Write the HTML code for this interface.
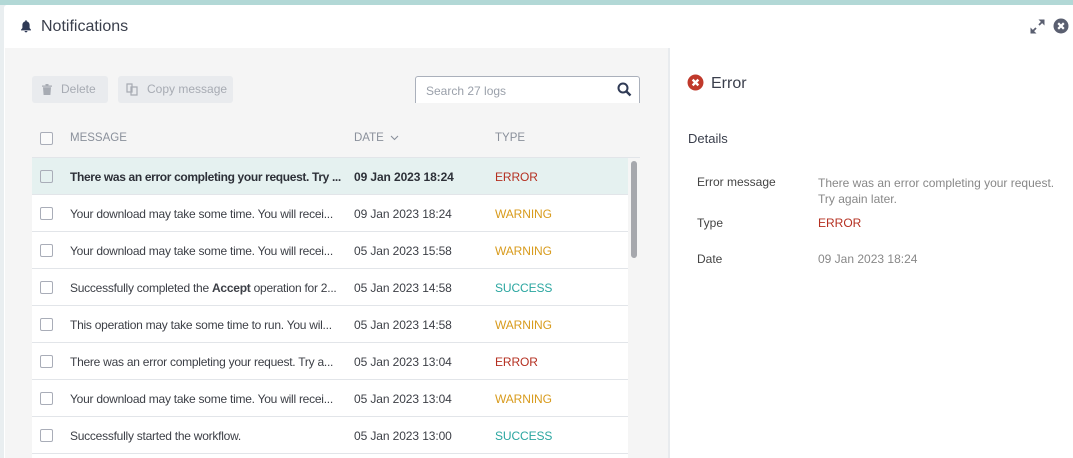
<!DOCTYPE html>
<html style="width:1073px;height:458px;overflow:hidden"><head><meta charset="utf-8"><style>
*{box-sizing:border-box;margin:0;padding:0}
body{width:1073px;height:458px;overflow:hidden;background:#e9eef0;font-family:"Liberation Sans",sans-serif;color:#333;position:relative}
.topstrip{position:absolute;left:0;top:0;width:1073px;height:5px;background:#b2d8d6}
.modal{position:absolute;left:4px;top:5px;width:1069px;height:453px;background:#fff;border-top-left-radius:3px}
.a{position:absolute;white-space:nowrap}
.left{position:absolute;left:5px;top:48px;width:663px;height:410px;background:#f5f5f5}
.div{position:absolute;left:668px;top:48px;width:2px;height:410px;background:#e8ebee}
.btn{position:absolute;top:76px;height:27px;background:#e9ebee;border-radius:3px;color:#a7abb3;font-size:12px;line-height:27px}
.row{position:absolute;left:32px;width:596px;height:37px;background:#fff;border-bottom:1px solid #e2e5e9;font-size:12px;color:#3c3f46}
.row .cb,.hdr .cb{position:absolute;left:8px;top:12px;width:13px;height:13px;border:1.5px solid #a9adb8;border-radius:2px;background:#fff}
.row .m{position:absolute;left:38px;top:12px;letter-spacing:-0.25px}
.row .d{position:absolute;left:322px;top:12px;letter-spacing:-0.1px}
.row .t{position:absolute;left:463px;top:12px;letter-spacing:-0.1px}
.err{color:#b53021}.warn{color:#d89b1d}.succ{color:#2aa6a0}
.lbl{font-size:12px;color:#444}
.val{font-size:12px;color:#888}
</style></head><body>
<div class="topstrip"></div>
<div class="modal"></div>
<svg class="a" style="left:19px;top:19px" width="14" height="14" viewBox="0 0 14 14"><path d="M7 1.2c-.5 0-.8.3-.8.8v.4C4.4 2.8 3.4 4.3 3.4 6v3L2 10.8v.6h10v-.6L10.6 9V6c0-1.7-1-3.2-2.8-3.6V2c0-.5-.3-.8-.8-.8zM5.6 12a1.4 1.4 0 0 0 2.8 0z" fill="#2f3a55"/></svg>
<div class="a" style="left:41px;top:18px;font-size:16px;color:#3a3f4c">Notifications</div>
<svg class="a" style="left:1029px;top:18px" width="17" height="17" viewBox="0 0 17 17"><path d="M2 15l5-5M15 2l-5 5" stroke="#5a5f70" stroke-width="1.8"/><path d="M1.5 9.5v6h6zM15.5 7.5v-6h-6z" fill="#5a5f70"/></svg>
<svg class="a" style="left:1053px;top:18px" width="16" height="16" viewBox="0 0 16 16"><circle cx="8" cy="8" r="7.5" fill="#5a5f70"/><path d="M5.2 5.2l5.6 5.6M10.8 5.2l-5.6 5.6" stroke="#fff" stroke-width="2.2"/></svg>
<div class="left"></div>
<div class="div"></div>
<div class="btn" style="left:32px;width:76px"><svg class="a" style="left:10px;top:8px" width="10" height="11" viewBox="0 0 10 11"><path d="M0 1.5h10v1.2H0zM3.5 0h3v1.5h-3zM1 3.2h8l-.6 7.8H1.6z" fill="#a7abb3"/></svg><span class="a" style="left:29px">Delete</span></div>
<div class="btn" style="left:118px;width:115px"><svg class="a" style="left:8px;top:7px" width="13" height="13" viewBox="0 0 13 13"><path d="M1 1h5v8H1zM5 4h6v8H5z" fill="none" stroke="#a7abb3" stroke-width="1.2"/></svg><span class="a" style="left:29px">Copy message</span></div>
<div class="a" style="left:415px;top:76px;width:225px;height:27px;background:#fff;border:1px solid #aab0bb;border-bottom:none;border-radius:3px 3px 0 0"></div>
<div class="a" style="left:426px;top:84px;font-size:12px;color:#9aa0aa">Search 27 logs</div>
<svg class="a" style="left:617px;top:82px" width="15" height="15" viewBox="0 0 15 15"><circle cx="6" cy="6" r="4.5" fill="none" stroke="#2f3a55" stroke-width="2"/><path d="M9.5 9.5l4 4" stroke="#2f3a55" stroke-width="2.4"/></svg>
<div class="hdr a" style="left:32px;top:120px;width:608px;height:38px;border-bottom:1px solid #e2e5e9"><div class="cb" style="top:12px;background:#fafafa"></div>
<span class="a" style="left:38px;top:12px;font-size:11.5px;color:#8a909b">MESSAGE</span>
<span class="a" style="left:322px;top:12px;font-size:11.5px;color:#8a909b">DATE <svg width="9" height="6" viewBox="0 0 9 6" style="margin-left:3px"><path d="M1 1l3.5 3.5L8 1" fill="none" stroke="#8a909b" stroke-width="1.1"/></svg></span>
<span class="a" style="left:463px;top:12px;font-size:11.5px;color:#8a909b">TYPE</span></div>
<div class="row" style="top:158px;background:#e5f1f0;font-weight:bold;color:#2d3038"><div class="cb" style="background:#e5f1f0"></div><span class="m" style="letter-spacing:-0.35px">There was an error completing your request. Try ...</span><span class="d">09 Jan 2023 18:24</span><span class="t err" style="font-weight:normal">ERROR</span></div>
<div class="row" style="top:195px"><div class="cb"></div><span class="m">Your download may take some time. You will recei...</span><span class="d">09 Jan 2023 18:24</span><span class="t warn">WARNING</span></div>
<div class="row" style="top:232px"><div class="cb"></div><span class="m">Your download may take some time. You will recei...</span><span class="d">05 Jan 2023 15:58</span><span class="t warn">WARNING</span></div>
<div class="row" style="top:269px"><div class="cb"></div><span class="m">Successfully completed the <b>Accept</b> operation for 2...</span><span class="d">05 Jan 2023 14:58</span><span class="t succ">SUCCESS</span></div>
<div class="row" style="top:306px"><div class="cb"></div><span class="m">This operation may take some time to run. You wil...</span><span class="d">05 Jan 2023 14:58</span><span class="t warn">WARNING</span></div>
<div class="row" style="top:343px"><div class="cb"></div><span class="m">There was an error completing your request. Try a...</span><span class="d">05 Jan 2023 13:04</span><span class="t err">ERROR</span></div>
<div class="row" style="top:380px"><div class="cb"></div><span class="m">Your download may take some time. You will recei...</span><span class="d">05 Jan 2023 13:04</span><span class="t warn">WARNING</span></div>
<div class="row" style="top:417px"><div class="cb"></div><span class="m">Successfully started the workflow.</span><span class="d">05 Jan 2023 13:00</span><span class="t succ">SUCCESS</span></div>
<div class="row" style="top:454px;height:4px;border:none"></div>
<div class="a" style="left:631px;top:161px;width:6px;height:97px;background:#a6a8ad;border-radius:3px"></div>
<svg class="a" style="left:687px;top:74px" width="17" height="17" viewBox="0 0 16 16"><circle cx="8" cy="8" r="7.5" fill="#c0392b"/><path d="M5.3 5.3l5.4 5.4M10.7 5.3l-5.4 5.4" stroke="#fff" stroke-width="2.2"/></svg>
<div class="a" style="left:711px;top:75px;font-size:16px;color:#3a3f4c">Error</div>
<div class="a" style="left:688px;top:131px;font-size:13px;color:#3a3f4c">Details</div>
<div class="a lbl" style="left:697px;top:175px">Error message</div>
<div class="a val" style="left:818px;top:175px;line-height:16px">There was an error completing your request.<br>Try again later.</div>
<div class="a lbl" style="left:697px;top:216px">Type</div>
<div class="a val err" style="left:818px;top:216px;color:#b53021">ERROR</div>
<div class="a lbl" style="left:697px;top:252px">Date</div>
<div class="a val" style="left:818px;top:252px">09 Jan 2023 18:24</div>
</body></html>
